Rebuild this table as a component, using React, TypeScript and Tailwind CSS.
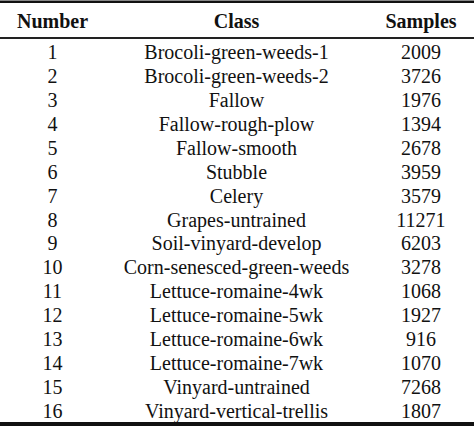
import React from "react";

const rows: [string, string, string][] = [
  ["1", "Brocoli-green-weeds-1", "2009"],
  ["2", "Brocoli-green-weeds-2", "3726"],
  ["3", "Fallow", "1976"],
  ["4", "Fallow-rough-plow", "1394"],
  ["5", "Fallow-smooth", "2678"],
  ["6", "Stubble", "3959"],
  ["7", "Celery", "3579"],
  ["8", "Grapes-untrained", "11271"],
  ["9", "Soil-vinyard-develop", "6203"],
  ["10", "Corn-senesced-green-weeds", "3278"],
  ["11", "Lettuce-romaine-4wk", "1068"],
  ["12", "Lettuce-romaine-5wk", "1927"],
  ["13", "Lettuce-romaine-6wk", "916"],
  ["14", "Lettuce-romaine-7wk", "1070"],
  ["15", "Vinyard-untrained", "7268"],
  ["16", "Vinyard-vertical-trellis", "1807"],
];

export default function App() {
  return (
    <div
      className="w-[474px] h-[427px] bg-white text-[#111] overflow-hidden"
      style={{ fontFamily: '"Liberation Serif", "Times New Roman", serif' }}
    >
      <div className="h-[1px] bg-[#888]" />
      <div className="h-[2px] bg-[#111]" />
      <div className="grid grid-cols-[105px_263px_106px] h-[34px] pt-[2px] items-center text-[20px] leading-[24px] font-bold">
        <div className="text-center">Number</div>
        <div className="text-center">Class</div>
        <div className="text-center">Samples</div>
      </div>
      <div className="h-[2px] bg-[#222]" />
      <div className="h-[382px]">
        {rows.map(([n, c, s]) => (
          <div
            key={n}
            className="grid grid-cols-[105px_263px_106px] h-[23.875px] pt-[3px] items-center text-[20px] leading-[20px]"
          >
            <div className="text-center">{n}</div>
            <div className="text-center">{c}</div>
            <div className="text-center">{s}</div>
          </div>
        ))}
      </div>
      <div className="h-[1px] bg-white" />
      <div className="h-[4px] bg-[#111]" />
    </div>
  );
}
